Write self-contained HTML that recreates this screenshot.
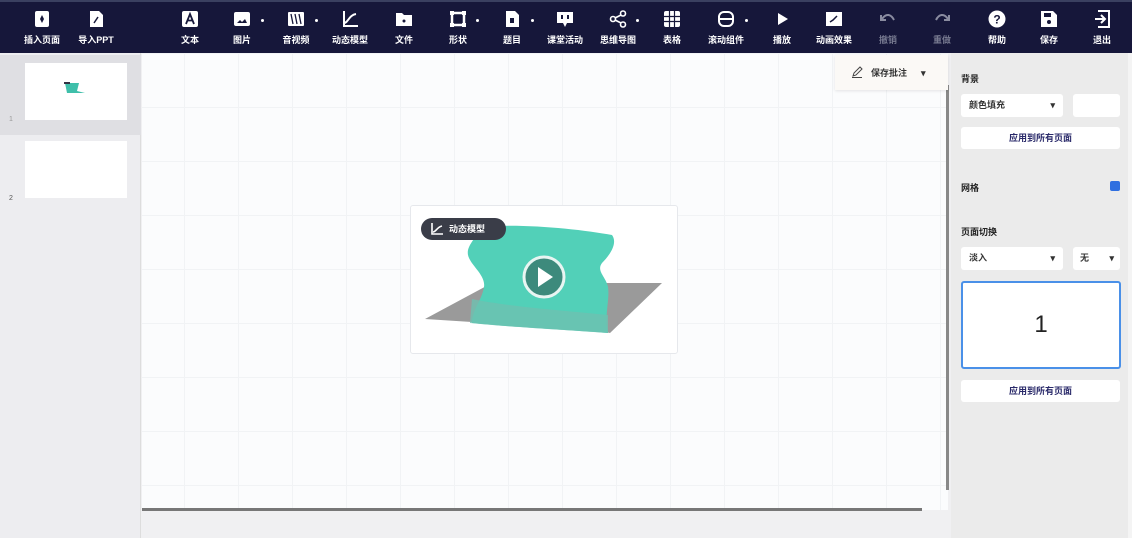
<!DOCTYPE html>
<html><head><meta charset="utf-8"><style>
*{margin:0;padding:0;box-sizing:border-box}
body{width:1132px;height:538px;overflow:hidden;background:#f0f0f2;font-family:"Liberation Sans","Noto Sans CJK SC",sans-serif;position:relative}
.tb{position:absolute;left:0;top:0;width:1132px;height:53px;background:#16173a;border-top:2px solid #3a4060}
.it{position:absolute;top:8px;width:60px;margin-left:-30px;text-align:center;color:#fff;font-size:9px;font-weight:bold}
.ic{display:block;margin:0 auto 5px;width:18px;height:18px;position:relative}
.it.dis{color:#777a90}
.dot{position:absolute;top:17px;width:3px;height:3px;background:#fff;border-radius:50%}
.left{position:absolute;left:0;top:53px;width:141px;height:485px;background:#ededf0;border-right:1px solid #ddd}
.sel{position:absolute;left:0;top:2px;width:141px;height:80px;background:#dfdfe3}
.th{position:absolute;left:25px;width:102px;height:57px;background:#fff}
.canvas{position:absolute;left:142px;top:53px;width:806px;height:457px;background-color:#fbfcfd;background-image:linear-gradient(#f1f3f5 1px,transparent 1px),linear-gradient(90deg,#f1f3f5 1px,transparent 1px);background-size:54px 54px;background-position:-12px 0}
.right{position:absolute;left:951px;top:53px;width:177px;height:485px;background:#ebebeb}
.rb{position:absolute;right:0;top:53px;width:4px;height:485px;background:#f4f4f4}
.lbl{position:absolute;font-size:9px;color:#222;font-weight:bold}
.box{position:absolute;background:#fff;border-radius:3px;font-size:9px;color:#333}
.btn{position:absolute;left:10px;width:159px;height:22px;background:#fff;border-radius:3px;text-align:center;line-height:22px;font-size:9px;color:#2a2a6a;font-weight:bold}
</style></head><body>
<div class="tb">
<div class="it" style="left:42px"><svg class="ic" viewBox="0 0 18 18"><rect x="2" y="1" width="14" height="16" rx="2" fill="#fff"/><path d="M9 5l2 4-2 4-2-4z" fill="#16173a"/></svg>插入页面</div>
<div class="it" style="left:96px"><svg class="ic" viewBox="0 0 18 18"><path d="M3 1h9l4 4v12H3z" fill="#fff"/><path d="M7 13l4-6" stroke="#16173a" stroke-width="1.5"/></svg>导入PPT</div>
<div class="it" style="left:190px"><svg class="ic" viewBox="0 0 18 18"><rect x="1" y="1" width="16" height="16" rx="2" fill="#fff"/><path d="M5 14L9 4l4 10M6.5 10.5h5" stroke="#16173a" stroke-width="1.8" fill="none"/></svg>文本</div>
<div class="it" style="left:242px"><svg class="ic" viewBox="0 0 18 18"><rect x="1" y="2" width="16" height="14" rx="2" fill="#fff"/><path d="M4 13l3-3 2 2 3-3 2 4z" fill="#16173a"/></svg>图片</div><div class="dot" style="left:261px"></div>
<div class="it" style="left:296px"><svg class="ic" viewBox="0 0 18 18"><rect x="1" y="2" width="16" height="14" rx="1" fill="#fff"/><path d="M4 4l2 10M8 4l2 10M12 4l2 10" stroke="#16173a" stroke-width="1.3"/></svg>音视频</div><div class="dot" style="left:315px"></div>
<div class="it" style="left:350px"><svg class="ic" viewBox="0 0 18 18"><path d="M3 1v15h14M3 13c4 0 5-8 12-9" stroke="#fff" stroke-width="2" fill="none"/></svg>动态模型</div>
<div class="it" style="left:404px"><svg class="ic" viewBox="0 0 18 18"><path d="M1 3h6l2 2h8v11H1z" fill="#fff"/><circle cx="9" cy="11" r="1.5" fill="#16173a"/></svg>文件</div>
<div class="it" style="left:458px"><svg class="ic" viewBox="0 0 18 18"><rect x="3" y="3" width="12" height="12" stroke="#fff" stroke-width="2.5" fill="none"/><rect x="1" y="1" width="4" height="4" fill="#fff"/><rect x="13" y="1" width="4" height="4" fill="#fff"/><rect x="1" y="13" width="4" height="4" fill="#fff"/><rect x="13" y="13" width="4" height="4" fill="#fff"/></svg>形状</div><div class="dot" style="left:476px"></div>
<div class="it" style="left:512px"><svg class="ic" viewBox="0 0 18 18"><path d="M3 1h9l4 4v12H3z" fill="#fff"/><rect x="7" y="8" width="4" height="5" fill="#16173a"/></svg>题目</div><div class="dot" style="left:531px"></div>
<div class="it" style="left:565px"><svg class="ic" viewBox="0 0 18 18"><path d="M1 2h16v11h-6l-2 4-2-4H1z" fill="#fff"/><rect x="5" y="5" width="2" height="4" fill="#16173a"/><rect x="11" y="5" width="2" height="4" fill="#16173a"/></svg>课堂活动</div>
<div class="it" style="left:618px"><svg class="ic" viewBox="0 0 18 18"><circle cx="4" cy="9" r="2.5" stroke="#fff" stroke-width="1.6" fill="none"/><circle cx="14" cy="3.5" r="2.5" stroke="#fff" stroke-width="1.6" fill="none"/><circle cx="14" cy="14.5" r="2.5" stroke="#fff" stroke-width="1.6" fill="none"/><path d="M6 8l6-3M6 10l6 3" stroke="#fff" stroke-width="1.6"/></svg>思维导图</div><div class="dot" style="left:636px"></div>
<div class="it" style="left:672px"><svg class="ic" viewBox="0 0 18 18"><rect x="1" y="1" width="16" height="16" rx="2" fill="#fff"/><path d="M6.5 1v16M11.5 1v16M1 6.5h16M1 11.5h16" stroke="#16173a" stroke-width="1.2"/></svg>表格</div>
<div class="it" style="left:726px"><svg class="ic" viewBox="0 0 18 18"><rect x="2" y="2" width="14" height="14" rx="5" stroke="#fff" stroke-width="2" fill="none"/><path d="M2 9h14" stroke="#fff" stroke-width="2"/></svg>滚动组件</div><div class="dot" style="left:745px"></div>
<div class="it" style="left:782px"><svg class="ic" viewBox="0 0 18 18"><path d="M5 3l10 6-10 6z" fill="#fff"/></svg>播放</div>
<div class="it" style="left:834px"><svg class="ic" viewBox="0 0 18 18"><rect x="1" y="2" width="16" height="14" fill="#fff"/><path d="M5 12l3-2 4-4" stroke="#16173a" stroke-width="1.5"/></svg>动画效果</div>
<div class="it dis" style="left:888px"><svg class="ic" viewBox="0 0 18 18"><path d="M3 9c4-6 9-5 12 1" stroke="#8a8ca0" stroke-width="2" fill="none"/><path d="M2 5v5h5" stroke="#8a8ca0" stroke-width="2" fill="none"/></svg>撤销</div>
<div class="it dis" style="left:942px"><svg class="ic" viewBox="0 0 18 18"><path d="M15 9C11 3 6 4 3 10" stroke="#8a8ca0" stroke-width="2" fill="none"/><path d="M16 5v5h-5" stroke="#8a8ca0" stroke-width="2" fill="none"/></svg>重做</div>
<div class="it" style="left:997px"><svg class="ic" viewBox="0 0 18 18"><circle cx="9" cy="9" r="8.5" fill="#fff"/><text x="9" y="13.5" font-size="12" font-weight="bold" text-anchor="middle" fill="#16173a" font-family="Liberation Sans">?</text></svg>帮助</div>
<div class="it" style="left:1049px"><svg class="ic" viewBox="0 0 18 18"><path d="M1 1h12l4 4v12H1z" fill="#fff"/><rect x="4" y="3" width="7" height="4" fill="#16173a"/><circle cx="9" cy="12" r="2" fill="#16173a"/></svg>保存</div>
<div class="it" style="left:1102px"><svg class="ic" viewBox="0 0 18 18"><path d="M5 1h11v16H5" stroke="#fff" stroke-width="2" fill="none"/><path d="M2 9h9M8 5l4 4-4 4" stroke="#fff" stroke-width="2" fill="none"/></svg>退出</div>
</div>

<div class="left"><div class="sel"></div>
<div class="th" style="top:10px"><svg style="position:absolute;left:36px;top:18px" width="26" height="14" viewBox="0 0 26 14"><path d="M4 2h14l-2 8 8 2H6z" fill="#3fbfaa"/><path d="M3 2h6" stroke="#334" stroke-width="2"/></svg></div>
<div style="position:absolute;left:9px;top:63px;font-size:7px;color:#999">1</div>
<div class="th" style="top:88px"></div>
<div style="position:absolute;left:9px;top:142px;font-size:7px;color:#555">2</div>
</div>

<div class="canvas"></div>
<div style="position:absolute;left:946px;top:85px;width:3px;height:405px;background:#888"></div>
<div style="position:absolute;left:142px;top:508px;width:780px;height:3px;background:#777"></div>

<div style="position:absolute;left:835px;top:55px;width:113px;height:35px;background:#fbf9f6;box-shadow:0 1px 3px rgba(0,0,0,.1);font-size:9px;color:#333;font-weight:bold;line-height:37px;padding-left:16px">
<svg width="12" height="12" viewBox="0 0 12 12" style="vertical-align:-2px;margin-right:8px"><path d="M2 10l1-3 6-6 2 2-6 6zM1 11.5h10" stroke="#444" stroke-width="1" fill="none"/></svg>保存批注<span style="margin-left:14px">▾</span></div>

<div style="position:absolute;left:410px;top:205px;width:268px;height:149px;background:#fff;border:1px solid #e6e8ec;border-radius:3px"></div>
<svg style="position:absolute;left:420px;top:215px" width="250" height="125" viewBox="0 0 250 125">
<path d="M5 104L72 68L242 68L190 118L175 115Z" fill="#9a9a9a"/>
<path d="M60 12C100 8 160 14 192 20C198 28 190 40 182 48C176 56 186 62 188 72C190 85 184 100 188 118C150 115 90 112 52 108C52 95 62 85 64 72C66 60 50 50 48 40C46 30 58 22 60 12Z" fill="#52d0b8"/>
<path d="M52 84C90 92 150 96 188 100L188 118C150 115 90 112 50 108Z" fill="#6ec1b0" opacity=".8"/>
<circle cx="124" cy="62" r="20" fill="#3d8a7c" stroke="#e8f5f2" stroke-width="3"/>
<path d="M118 52l15 10-15 10z" fill="#fff"/>
</svg>
<div style="position:absolute;left:421px;top:218px;width:85px;height:22px;border-radius:11px;background:#3a3d48;color:#fff;font-size:9px;line-height:22px;padding-left:28px;font-weight:bold">动态模型
<svg style="position:absolute;left:10px;top:5px" width="12" height="12" viewBox="0 0 12 12"><path d="M1 0v11h11M2 9c3 0 4-5 9-6" stroke="#fff" stroke-width="1.6" fill="none"/></svg></div>

<div class="right">
<div class="lbl" style="left:10px;top:19px">背景</div>
<div class="box" style="left:10px;top:41px;width:102px;height:23px;line-height:23px;padding-left:8px;font-weight:bold">颜色填充<span style="position:absolute;right:8px">▾</span></div>
<div class="box" style="left:122px;top:41px;width:47px;height:23px"></div>
<div class="btn" style="top:74px">应用到所有页面</div>
<div class="lbl" style="left:10px;top:128px">网格</div>
<div style="position:absolute;left:159px;top:128px;width:10px;height:10px;background:#2f6fe0;border-radius:2px"></div>
<div class="lbl" style="left:10px;top:172px">页面切换</div>
<div class="box" style="left:10px;top:194px;width:102px;height:23px;line-height:23px;padding-left:8px;font-weight:bold">淡入<span style="position:absolute;right:8px">▾</span></div>
<div class="box" style="left:122px;top:194px;width:47px;height:23px;line-height:23px;padding-left:7px;font-weight:bold">无<span style="position:absolute;right:6px">▾</span></div>
<div style="position:absolute;left:10px;top:228px;width:160px;height:88px;background:#fff;border:2px solid #4a90e8;border-radius:3px;text-align:center;line-height:84px;font-size:24px;color:#222">1</div>
<div class="btn" style="top:327px">应用到所有页面</div>
</div>
<div class="rb"></div>
</body></html>
